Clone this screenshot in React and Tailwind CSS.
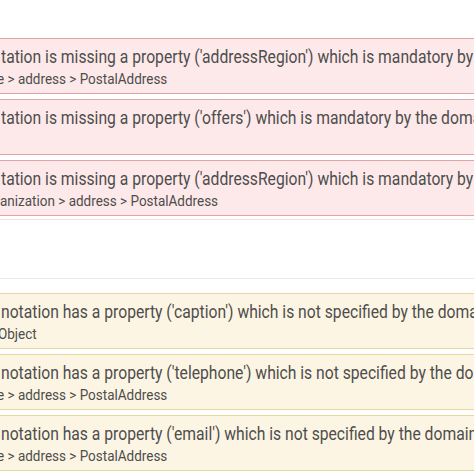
import React from 'react';

const errors = [
    { msg: "tation is missing a property ('addressRegion') which is mandatory by the domain", path: 'e > address > PostalAddress', shift: '-ml-[4px]' },
    { msg: "tation is missing a property ('offers') which is mandatory by the domain", path: '', shift: '' },
    { msg: "tation is missing a property ('addressRegion') which is mandatory by the domain", path: 'anization > address > PostalAddress', shift: '-ml-[1px]' },
];

const warnings = [
    { msg: "notation has a property ('caption') which is not specified by the domain", path: 'Object', shift: '-ml-[3px]' },
    { msg: "notation has a property ('telephone') which is not specified by the domain", path: 'e > address > PostalAddress', shift: '-ml-[4px]' },
    { msg: "notation has a property ('email') which is not specified by the domain", path: 'e > address > PostalAddress', shift: '-ml-[4px]' },
];

const Row = ({ item, tone }) => (
    <div
        className={
            tone === 'error'
                ? 'h-[56px] border border-[#e0a3a6] bg-[#fde9e9] pl-4 pt-[6px] overflow-hidden'
                : 'h-[56px] border border-[#ead69c] bg-[#fdf5e3] pl-4 pt-[6px] overflow-hidden'
        }
    >
        <p className="whitespace-nowrap origin-left scale-x-[0.825] text-[19px] leading-[24px] text-[#4d4d4d]">
            {item.msg}
        </p>
        <p className={`mt-[1px] whitespace-nowrap origin-left scale-x-[0.93] text-[14.5px] leading-[20px] text-[#4d4d4d] ${item.shift}`}>
            {item.path || '\u00a0'}
        </p>
    </div>
);

export default function App() {
    return (
        <div className="w-[474px] h-[474px] overflow-hidden bg-white font-['Roboto',sans-serif]">
            <div className="pt-[38px]">
                <div className="-mx-4 flex flex-col gap-[5px] pb-[3px] border-b border-[#f6dede]">
                    {errors.map((e, i) => (
                        <Row key={i} item={e} tone="error" />
                    ))}
                </div>
            </div>
            <div className="mt-[58px] border-t border-[#e9e9e9] pt-[14px]">
                <div className="-mx-4 flex flex-col gap-[5px]">
                    {warnings.map((w, i) => (
                        <Row key={i} item={w} tone="warning" />
                    ))}
                </div>
            </div>
        </div>
    );
}
